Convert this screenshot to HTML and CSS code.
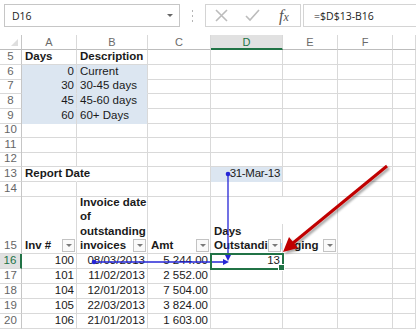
FILE: index.html
```html
<!DOCTYPE html>
<html lang="en">
<head>
<meta charset="UTF-8">
<meta name="viewport" content="width=device-width, initial-scale=1.0">
<title>Aging report</title>
<link rel="stylesheet" href="styles.css">
</head>
<body>
<div class="page">
  <div class="toolbar">
    <div class="namebox"><span>D16</span><span class="caret"></span></div>
    <div class="grip"><i></i><i></i><i></i></div>
    <div class="fbtns">
      <svg width="13" height="13" viewBox="0 0 13 13"><path d="M1 1L12 12M12 1L1 12" stroke="#bcbcbc" stroke-width="1.6" fill="none"/></svg>
      <svg width="15" height="13" viewBox="0 0 15 13"><path d="M1 7L5 11L14 1" stroke="#bcbcbc" stroke-width="1.6" fill="none"/></svg>
      <span class="fx">f<span>x</span></span>
    </div>
    <div class="formula">=$D$13-B16</div>
  </div>

  <div class="sheet">
    <div class="row head">
      <div class="corner"></div>
      <div class="ch">A</div><div class="ch">B</div><div class="ch">C</div><div class="ch on">D</div><div class="ch">E</div><div class="ch">F</div><div class="ch"></div>
    </div>
    <div class="row">
      <div class="rh">5</div><div class="c b">Days</div><div class="c b">Description</div><div class="c"></div><div class="c"></div><div class="c"></div><div class="c"></div><div class="c"></div>
    </div>
    <div class="row r14">
      <div class="rh">6</div><div class="c n fill">0</div><div class="c fill">Current</div><div class="c"></div><div class="c"></div><div class="c"></div><div class="c"></div><div class="c"></div>
    </div>
    <div class="row">
      <div class="rh">7</div><div class="c n fill">30</div><div class="c fill">30-45 days</div><div class="c"></div><div class="c"></div><div class="c"></div><div class="c"></div><div class="c"></div>
    </div>
    <div class="row">
      <div class="rh">8</div><div class="c n fill">45</div><div class="c fill">45-60 days</div><div class="c"></div><div class="c"></div><div class="c"></div><div class="c"></div><div class="c"></div>
    </div>
    <div class="row r14">
      <div class="rh">9</div><div class="c n fill">60</div><div class="c fill">60+ Days</div><div class="c"></div><div class="c"></div><div class="c"></div><div class="c"></div><div class="c"></div>
    </div>
    <div class="row">
      <div class="rh">10</div><div class="c"></div><div class="c"></div><div class="c"></div><div class="c"></div><div class="c"></div><div class="c"></div><div class="c"></div>
    </div>
    <div class="row r14">
      <div class="rh">11</div><div class="c"></div><div class="c"></div><div class="c"></div><div class="c"></div><div class="c"></div><div class="c"></div><div class="c"></div>
    </div>
    <div class="row">
      <div class="rh">12</div><div class="c"></div><div class="c"></div><div class="c"></div><div class="c"></div><div class="c"></div><div class="c"></div><div class="c"></div>
    </div>
    <div class="row">
      <div class="rh">13</div><div class="c b spill">Report Date</div><div class="c"></div><div class="c"></div><div class="c n fill tight">31-Mar-13</div><div class="c"></div><div class="c"></div><div class="c"></div>
    </div>
    <div class="row r14">
      <div class="rh">14</div><div class="c"></div><div class="c"></div><div class="c"></div><div class="c"></div><div class="c"></div><div class="c"></div><div class="c"></div>
    </div>
    <div class="row r58">
      <div class="rh">15</div>
      <div class="c b">Inv #<span class="flt"></span></div>
      <div class="c b wrap">Invoice date<br>of<br>outstanding<br>invoices<span class="flt"></span></div>
      <div class="c b">Amt<span class="flt"></span></div>
      <div class="c b wrap">Days<br>Outstanding<span class="flt"></span></div>
      <div class="c b">Aging<span class="flt"></span></div>
      <div class="c"></div><div class="c"></div>
    </div>
    <div class="row">
      <div class="rh on">16</div><div class="c n">100</div><div class="c n">08/03/2013</div><div class="c n">5 244.00</div><div class="c n sel">13</div><div class="c"></div><div class="c"></div><div class="c"></div>
    </div>
    <div class="row">
      <div class="rh">17</div><div class="c n">101</div><div class="c n">11/02/2013</div><div class="c n">2 552.00</div><div class="c"></div><div class="c"></div><div class="c"></div><div class="c"></div>
    </div>
    <div class="row">
      <div class="rh">18</div><div class="c n">104</div><div class="c n">12/01/2013</div><div class="c n">7 504.00</div><div class="c"></div><div class="c"></div><div class="c"></div><div class="c"></div>
    </div>
    <div class="row">
      <div class="rh">19</div><div class="c n">105</div><div class="c n">22/03/2013</div><div class="c n">3 824.00</div><div class="c"></div><div class="c"></div><div class="c"></div><div class="c"></div>
    </div>
    <div class="row">
      <div class="rh">20</div><div class="c n">106</div><div class="c n">21/01/2013</div><div class="c n">1 603.00</div><div class="c"></div><div class="c"></div><div class="c"></div><div class="c"></div>
    </div>
  </div>

  <!-- trace precedents + callout arrow -->
  <svg class="overlay" width="416" height="329" viewBox="0 0 416 329">
    <defs>
      <filter id="shadow" x="-20%" y="-20%" width="140%" height="140%">
        <feDropShadow dx="2" dy="2" stdDeviation="1.3" flood-color="#000" flood-opacity="0.35"/>
      </filter>
    </defs>
    <g fill="#2626d6" stroke="#2626d6" stroke-width="1.3">
      <circle cx="228" cy="174" r="2.3" stroke="none"/>
      <line x1="228" y1="174" x2="228" y2="256"/>
      <polygon points="225,255 231,255 228,261" stroke="none"/>
      <circle cx="94" cy="262" r="2.3" stroke="none"/>
      <line x1="94" y1="262" x2="224" y2="262"/>
      <polygon points="223,259 223,265 229,262" stroke="none"/>
    </g>
    <g filter="url(#shadow)">
      <line x1="387" y1="166" x2="293" y2="243" stroke="#c00000" stroke-width="3"/>
      <polygon points="283,252 298,248 289,237" fill="#c00000"/>
    </g>
  </svg>
</div>
</body>
</html>
```

FILE: styles.css
```css
body {
    margin: 0;
    background: #ffffff;
}
.page {
    position: relative;
    width: 416px;
    height: 329px;
    overflow: hidden;
    background: #ffffff;
    font-family: "Liberation Sans", Arial, sans-serif;
}

/* formula bar */
.toolbar {
    display: flex;
    align-items: center;
    height: 35px;
    padding: 4px 0 8px 4px;
    box-sizing: border-box;
}
.namebox {
    display: flex;
    align-items: center;
    justify-content: space-between;
    width: 176px;
    height: 23px;
    box-sizing: border-box;
    border: 1px solid #c6c6c6;
    padding: 0 6px 0 7px;
    font-family: "Open Sans", sans-serif;
    font-size: 10.5px;
    color: #222;
}
.caret {
    width: 0;
    height: 0;
    border-left: 3px solid transparent;
    border-right: 3px solid transparent;
    border-top: 3px solid #666;
}
.grip {
    display: flex;
    flex-direction: column;
    gap: 3px;
    margin: 0 12px 0 12px;
}
.grip i {
    display: block;
    width: 1px;
    height: 2px;
    background: #b5b5b5;
}
.fbtns {
    display: flex;
    align-items: center;
    width: 96px;
    height: 23px;
    box-sizing: border-box;
    border: 1px solid #d4d4d4;
    padding-left: 9px;
    gap: 17px;
}
.fx {
    font-family: "Liberation Serif", serif;
    font-style: italic;
    font-size: 16px;
    color: #555;
    margin-left: 2px;
}
.fx span {
    font-size: 12px;
}
.formula {
    flex: 1;
    height: 23px;
    box-sizing: border-box;
    border: 1px solid #d4d4d4;
    margin-left: 2px;
    margin-right: -2px;
    padding-left: 10px;
    display: flex;
    align-items: center;
    font-family: "Open Sans", sans-serif;
    font-size: 10.5px;
    color: #222;
}

/* grid */
.row {
    display: grid;
    grid-template-columns: 22px 55px 71px 63px 72px 55px 55px 23px;
    height: 15px;
}
.r14 { height: 14px; }
.r58 { height: 58px; }

.corner, .ch, .rh, .c {
    box-sizing: border-box;
    border-right: 1px solid #d9d9d9;
    border-bottom: 1px solid #d9d9d9;
}
.corner {
    position: relative;
    border-right-color: #c6c6c6;
    border-bottom-color: #bdbdbd;
}
.corner::after {
    content: "";
    position: absolute;
    right: 3px;
    bottom: 3px;
    border-left: 7px solid transparent;
    border-bottom: 7px solid #dedede;
}
.ch {
    display: flex;
    align-items: center;
    justify-content: center;
    font-size: 11px;
    color: #6a6a6a;
    border-bottom-color: #bdbdbd;
}
.ch.on {
    background: #e1e1e1;
    color: #217346;
    border-bottom: 2px solid #217346;
}
.rh {
    display: flex;
    align-items: flex-end;
    justify-content: center;
    padding-bottom: 1px;
    font-size: 11.5px;
    line-height: 13px;
    color: #666;
    border-right-color: #c6c6c6;
}
.rh.on {
    background: #e1e1e1;
    color: #217346;
    border-right: 2px solid #217346;
}

.c {
    position: relative;
    display: flex;
    align-items: flex-end;
    padding: 0 2px 1px 3px;
    font-size: 11.5px;
    line-height: 13px;
    color: #1a1a1a;
    white-space: nowrap;
    overflow: hidden;
}
.c.b { font-weight: bold; }
.c.n { justify-content: flex-end; }
.c.fill {
    background: #dce6f1;
    border-bottom-color: #dce6f1;
}
.c.tight { letter-spacing: -0.3px; }
.c.spill {
    overflow: visible;
    border-right-color: transparent;
}
.c.wrap {
    display: block;
    align-self: end;
    line-height: 14.6px;
    padding-bottom: 0;
}
.c.sel {
    overflow: visible;
    outline: 2px solid #217346;
    outline-offset: -1px;
    z-index: 1;
}
.c.sel::after {
    content: "";
    position: absolute;
    right: -3px;
    bottom: -3px;
    width: 5px;
    height: 5px;
    background: #217346;
    border: 1px solid #fff;
}

.flt {
    position: absolute;
    right: 1px;
    bottom: 1px;
    width: 13px;
    height: 13px;
    box-sizing: border-box;
    border: 1px solid #c3c3c3;
    background: #fafafa;
}
.flt::after {
    content: "";
    position: absolute;
    left: 3px;
    top: 4px;
    border-left: 3px solid transparent;
    border-right: 3px solid transparent;
    border-top: 3px solid #7a7a7a;
}

.overlay {
    position: absolute;
    left: 0;
    top: 0;
    pointer-events: none;
}
```
